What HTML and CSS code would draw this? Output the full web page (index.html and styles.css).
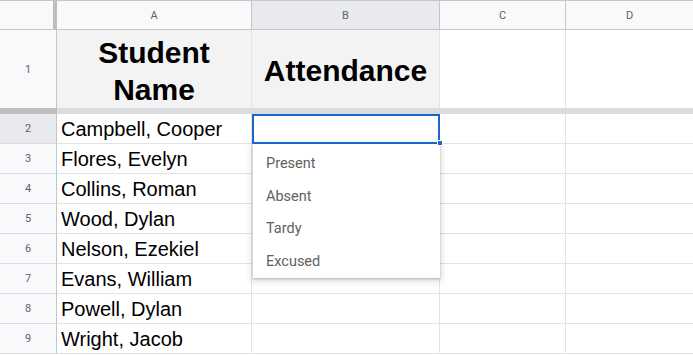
FILE: index.html
```html
<!DOCTYPE html>
<html>
<head>
<meta charset="utf-8">
<link rel="stylesheet" href="styles.css">
</head>
<body>
<div class="sheet">
  <div class="corner"></div>
  <div class="colhead">A</div>
  <div class="colhead active">B</div>
  <div class="colhead">C</div>
  <div class="colhead last">D</div>

  <div class="rowhead tall">1</div>
  <div class="cell title"><span class="title-text">Student<br>Name</span></div>
  <div class="cell title"><span class="title-text">Attendance</span></div>
  <div class="cell tall-cell"></div>
  <div class="cell tall-cell last"></div>

  <div class="freeze-head"></div>
  <div class="freeze-bar"></div>

  <div class="rowhead active">2</div>
  <div class="cell">Campbell, Cooper</div>
  <div class="cell selected">
    <span class="handle"></span>
    <div class="menu">
      <div class="menu-item">Present</div>
      <div class="menu-item">Absent</div>
      <div class="menu-item">Tardy</div>
      <div class="menu-item">Excused</div>
    </div>
  </div>
  <div class="cell"></div>
  <div class="cell last"></div>

  <div class="rowhead">3</div>
  <div class="cell">Flores, Evelyn</div>
  <div class="cell"></div>
  <div class="cell"></div>
  <div class="cell last"></div>

  <div class="rowhead">4</div>
  <div class="cell">Collins, Roman</div>
  <div class="cell"></div>
  <div class="cell"></div>
  <div class="cell last"></div>

  <div class="rowhead">5</div>
  <div class="cell">Wood, Dylan</div>
  <div class="cell"></div>
  <div class="cell"></div>
  <div class="cell last"></div>

  <div class="rowhead">6</div>
  <div class="cell">Nelson, Ezekiel</div>
  <div class="cell"></div>
  <div class="cell"></div>
  <div class="cell last"></div>

  <div class="rowhead">7</div>
  <div class="cell">Evans, William</div>
  <div class="cell"></div>
  <div class="cell"></div>
  <div class="cell last"></div>

  <div class="rowhead">8</div>
  <div class="cell">Powell, Dylan</div>
  <div class="cell"></div>
  <div class="cell"></div>
  <div class="cell last"></div>

  <div class="rowhead">9</div>
  <div class="cell">Wright, Jacob</div>
  <div class="cell"></div>
  <div class="cell"></div>
  <div class="cell last"></div>
</div>
</body>
</html>
```

FILE: styles.css
```css
* { box-sizing: border-box; }
html, body { margin: 0; padding: 0; background: #ffffff; }
body { width: 693px; height: 355px; overflow: hidden; }

.sheet {
  display: grid;
  grid-template-columns: 57px 195px 188px 126px 127px;
  grid-template-rows: 30px 78px 6px repeat(8, 30px);
  font-family: "Liberation Sans", Arial, sans-serif;
}

.corner {
  background: #f8f9fa;
  border-top: 1px solid #c4c7c5;
  border-right: 4px solid #bebebe;
  border-bottom: 1px solid #c4c7c5;
}

.colhead {
  background: #f8f9fa;
  border-top: 1px solid #c4c7c5;
  border-right: 1px solid #c4c7c5;
  border-bottom: 1px solid #c4c7c5;
  font-family: Roboto, "Noto Sans", sans-serif;
  font-size: 11px;
  color: #5f6368;
  display: flex;
  align-items: center;
  justify-content: center;
}
.colhead.active { background: #e8eaed; }
.colhead.last { border-right: none; }

.rowhead {
  background: #f8f9fa;
  border-right: 1px solid #c4c7c5;
  border-bottom: 1px solid #dadce0;
  font-family: Roboto, "Noto Sans", sans-serif;
  font-size: 11px;
  color: #5f6368;
  display: flex;
  align-items: center;
  justify-content: center;
}
.rowhead.tall { border-bottom: none; padding-top: 1px; }
.rowhead.active { background: #e8eaed; }

.cell {
  border-right: 1px solid #e2e3e3;
  border-bottom: 1px solid #e2e3e3;
  font-size: 20px;
  line-height: 28px;
  padding: 1px 0 0 4px;
  color: #000000;
  white-space: nowrap;
}
.cell.last { border-right: none; }
.cell.tall-cell { border-bottom: none; }

.cell.title {
  background: #f3f3f3;
  border-bottom: none;
  display: flex;
  align-items: center;
  justify-content: center;
  padding: 3px 0 0 0;
  text-align: center;
}
.title-text {
  font-weight: bold;
  font-size: 30px;
  line-height: 37px;
}

.freeze-head { background: #bebebe; }
.freeze-bar { grid-column: 2 / 6; background: #dadce0; }

.cell.selected { position: relative; z-index: 2; }
.cell.selected::after {
  content: "";
  position: absolute;
  left: 0;
  top: 0;
  right: -1px;
  bottom: -1px;
  border: 2px solid #1b66c9;
  z-index: 3;
}
.handle {
  position: absolute;
  right: -4px;
  bottom: -3px;
  width: 6px;
  height: 6px;
  background: #1b66c9;
  border: 1px solid #ffffff;
  z-index: 4;
}

.menu {
  position: absolute;
  top: 30px;
  left: 1px;
  width: 187px;
  padding-top: 4px;
  background: #ffffff;
  box-shadow: 0 2px 6px 2px rgba(60, 64, 67, 0.15), 0 1px 2px rgba(60, 64, 67, 0.3);
  z-index: 2;
}
.menu-item {
  height: 32.5px;
  line-height: 32.5px;
  padding-left: 13px;
  font-family: Roboto, "Noto Sans", sans-serif;
  font-size: 14.5px;
  color: #616161;
}
```
